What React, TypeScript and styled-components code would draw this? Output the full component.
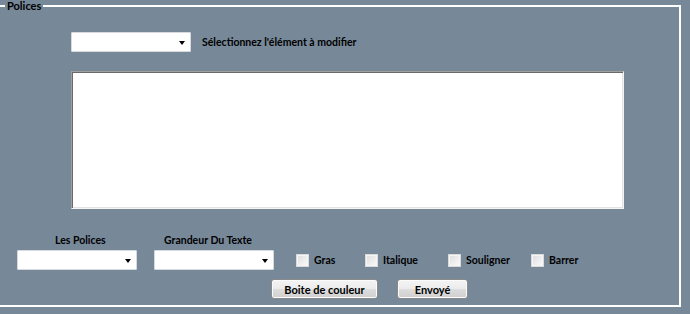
import React from "react";
import styled, { createGlobalStyle } from "styled-components";

const GlobalStyle = createGlobalStyle`
  html, body {
    margin: 0;
    padding: 0;
    background: #778899;
    overflow: hidden;
  }
  body {
    font-family: Lato, "Open Sans", "Liberation Sans", sans-serif;
    font-size: 11px;
    color: #000;
  }
`;

const Page = styled.div`
  width: 690px;
  height: 314px;
  padding-top: 5px;
  box-sizing: border-box;
  background: #778899;
`;

const Group = styled.section`
  position: relative;
  width: 681px;
  height: 302px;
  box-sizing: border-box;
  border-top: 2px solid #ffffff;
  border-right: 2px solid #ffffff;
  border-bottom: 2px solid #ffffff;
  display: flex;
  flex-direction: column;
`;

const Legend = styled.span`
  position: absolute;
  top: -8px;
  left: 5px;
  padding: 0 2px;
  background: #778899;
  font-weight: 700;
  font-size: 11px;
  line-height: 13px;
`;

const TopRow = styled.div`
  display: flex;
  align-items: center;
  gap: 11px;
  padding: 25px 0 0 71px;
`;

const Combo = styled.div`
  position: relative;
  width: 120px;
  height: 20px;
  box-sizing: border-box;
  background: #ffffff;
  border: 1px solid #d6d9dd;
  border-radius: 1px;
  flex: none;
  &::after {
    content: "";
    position: absolute;
    right: 5px;
    top: 8px;
    border-left: 3.5px solid transparent;
    border-right: 3.5px solid transparent;
    border-top: 4px solid #000;
  }
`;

const Label = styled.span<{ $indent?: number }>`
  font-weight: 700;
  font-size: 10.5px;
  line-height: 14px;
  white-space: nowrap;
  padding-left: ${(p) => p.$indent ?? 0}px;
`;

const TextArea = styled.div`
  margin: 19px 0 0 71px;
  width: 553px;
  height: 138px;
  box-sizing: border-box;
  background: #ffffff;
  border: 1px solid;
  border-color: #a0a0a0 #f4f4f4 #f4f4f4 #a0a0a0;
  box-shadow: inset 1px 1px 0 #696969, inset -1px -1px 0 #e3e3e3;
`;

const BottomRow = styled.div`
  display: flex;
  align-items: flex-end;
  padding: 24px 0 0 17px;
`;

const Field = styled.div<{ $gap?: number }>`
  display: flex;
  flex-direction: column;
  gap: 3px;
  margin-right: ${(p) => p.$gap ?? 0}px;
`;

const Checks = styled.div`
  display: flex;
  align-items: center;
  height: 20px;
`;

const CheckItem = styled.label<{ $w?: number }>`
  display: flex;
  align-items: center;
  gap: 5px;
  width: ${(p) => (p.$w ? `${p.$w}px` : "auto")};
  font-weight: 700;
  font-size: 10.5px;
  line-height: 14px;
`;

const Box = styled.span`
  width: 13px;
  height: 13px;
  box-sizing: border-box;
  border: 1px solid #d8dadc;
  background: linear-gradient(135deg, #dcdcdc 0%, #ececec 50%, #fafafa 100%);
  box-shadow: inset 0 0 0 1px #f6f6f6;
  flex: none;
`;

const ButtonRow = styled.div`
  display: flex;
  gap: 19px;
  padding: 9px 0 0 271px;
`;

const Button = styled.button<{ $w: number }>`
  width: ${(p) => p.$w}px;
  height: 20px;
  padding: 0;
  box-sizing: border-box;
  border: 1px solid #8a8a8a;
  border-radius: 3px;
  background: linear-gradient(#f4f4f4 0%, #ebebeb 50%, #dddddd 51%, #cfcfcf 100%);
  box-shadow: inset 0 0 0 1px #fbfbfb;
  font-family: inherit;
  font-weight: 700;
  font-size: 11px;
  color: #000;
`;

export default function App() {
  return (
    <Page>
      <GlobalStyle />
      <Group>
        <Legend>Polices</Legend>
        <TopRow>
          <Combo />
          <Label>Sélectionnez l'élément à modifier</Label>
        </TopRow>
        <TextArea />
        <BottomRow>
          <Field $gap={17}>
            <Label $indent={38}>Les Polices</Label>
            <Combo />
          </Field>
          <Field $gap={22}>
            <Label $indent={10}>Grandeur Du Texte</Label>
            <Combo />
          </Field>
          <Checks>
            <CheckItem $w={69}>
              <Box />
              Gras
            </CheckItem>
            <CheckItem $w={83}>
              <Box />
              Italique
            </CheckItem>
            <CheckItem $w={83}>
              <Box />
              Souligner
            </CheckItem>
            <CheckItem>
              <Box />
              Barrer
            </CheckItem>
          </Checks>
        </BottomRow>
        <ButtonRow>
          <Button $w={107}>Boite de couleur</Button>
          <Button $w={71}>Envoyé</Button>
        </ButtonRow>
      </Group>
    </Page>
  );
}
